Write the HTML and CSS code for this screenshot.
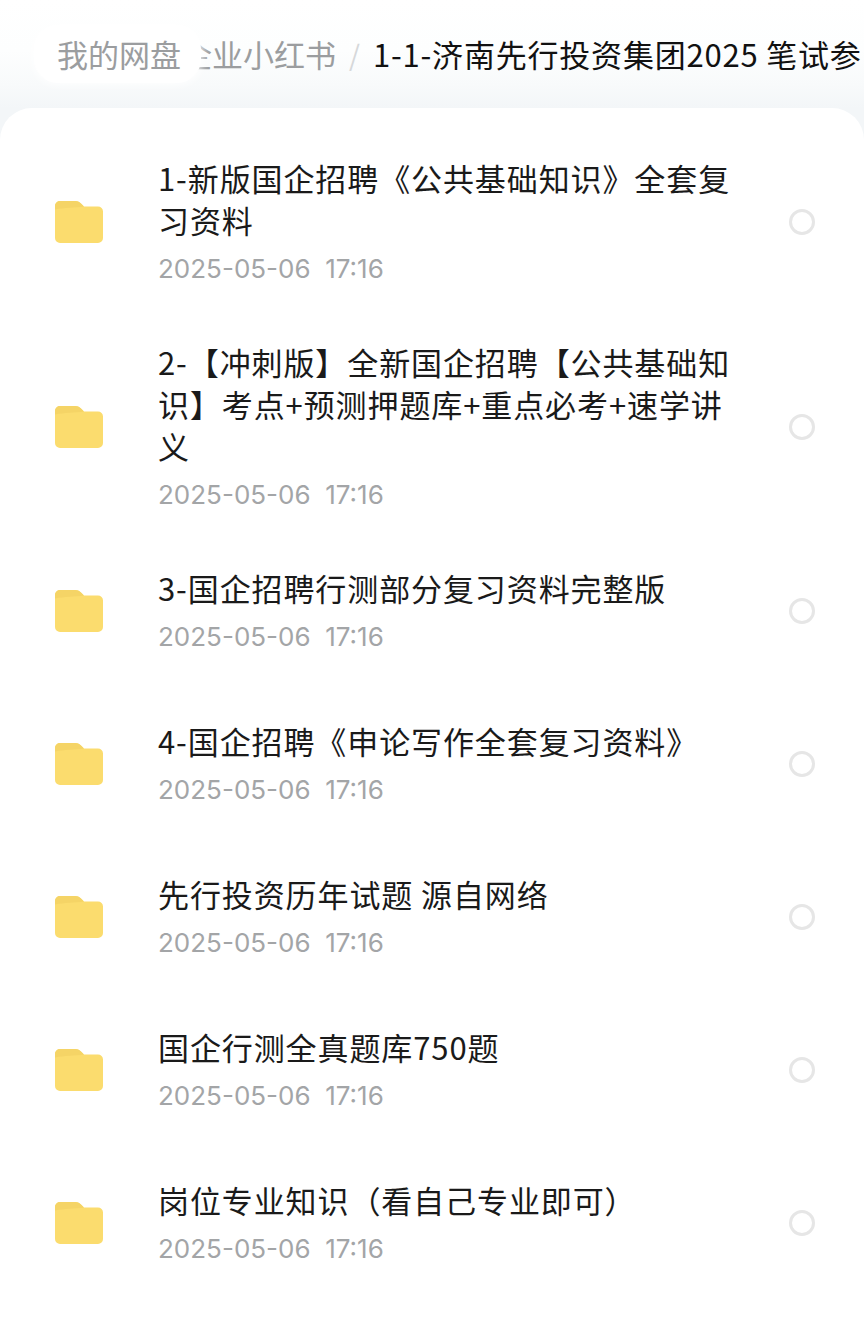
FILE: index.html
```html
<!DOCTYPE html>
<html lang="zh-CN">
<head>
    <meta charset="UTF-8" />
    <meta name="viewport" content="width=device-width, initial-scale=1.0" />
    <title>我的网盘</title>
    <link rel="stylesheet" href="styles.css">
</head>
<body>
    <svg class="sprite" width="0" height="0">
        <symbol id="folder" viewBox="0 0 48 42">
            <path d="M0 5a5 5 0 0 1 5-5h15c3 0 4.500 1 6.500 3l2.500 2.500h14a5 5 0 0 1 5 5v26.500a5 5 0 0 1-5 5H5a5 5 0 0 1-5-5z" fill="#fbdc6e"/>
            <path d="M0 5a5 5 0 0 1 5-5h15c3 0 4.500 1 6.500 3l2.500 2.500c-8 1.500-20 1-29 3z" fill="#f5d466"/>
        </symbol>
    </svg>

    <!-- Breadcrumb -->
    <nav class="breadcrumb">
        <span class="crumb-home">我的网盘</span>
        <span class="crumb-mid">企业小红书</span>
        <span class="crumb-sep">/</span>
        <span class="crumb-current">1-1-济南先行投资集团2025 笔试参</span>
    </nav>

    <!-- File list -->
    <main class="card">
        <div class="row row-two">
            <svg class="folder"><use href="#folder"/></svg>
            <div class="info">
                <div class="name">1-新版国企招聘《公共基础知识》全套复习资料</div>
                <div class="date">2025-05-06&nbsp;&nbsp;17:16</div>
            </div>
            <span class="radio"></span>
        </div>
        <div class="row row-three">
            <svg class="folder"><use href="#folder"/></svg>
            <div class="info">
                <div class="name">2-【冲刺版】全新国企招聘【公共基础知识】考点+预测押题库+重点必考+速学讲义</div>
                <div class="date">2025-05-06&nbsp;&nbsp;17:16</div>
            </div>
            <span class="radio"></span>
        </div>
        <div class="row">
            <svg class="folder"><use href="#folder"/></svg>
            <div class="info">
                <div class="name">3-国企招聘行测部分复习资料完整版</div>
                <div class="date">2025-05-06&nbsp;&nbsp;17:16</div>
            </div>
            <span class="radio"></span>
        </div>
        <div class="row">
            <svg class="folder"><use href="#folder"/></svg>
            <div class="info">
                <div class="name">4-国企招聘《申论写作全套复习资料》</div>
                <div class="date">2025-05-06&nbsp;&nbsp;17:16</div>
            </div>
            <span class="radio"></span>
        </div>
        <div class="row">
            <svg class="folder"><use href="#folder"/></svg>
            <div class="info">
                <div class="name">先行投资历年试题 源自网络</div>
                <div class="date">2025-05-06&nbsp;&nbsp;17:16</div>
            </div>
            <span class="radio"></span>
        </div>
        <div class="row">
            <svg class="folder"><use href="#folder"/></svg>
            <div class="info">
                <div class="name">国企行测全真题库750题</div>
                <div class="date">2025-05-06&nbsp;&nbsp;17:16</div>
            </div>
            <span class="radio"></span>
        </div>
        <div class="row">
            <svg class="folder"><use href="#folder"/></svg>
            <div class="info">
                <div class="name">岗位专业知识（看自己专业即可）</div>
                <div class="date">2025-05-06&nbsp;&nbsp;17:16</div>
            </div>
            <span class="radio"></span>
        </div>
    </main>
</body>
</html>
```

FILE: styles.css
```css
/* Page with soft grey header behind the white card */
html, body {
    height: 100%;
}

body {
    margin: 0;
    height: 1338px;
    overflow: hidden;
    font-family: "Noto Sans CJK SC", "Noto Sans", sans-serif;
    background: linear-gradient(#ffffff 0, #fdfefe 50px, #f8fafb 85px, #f3f6f8 108px);
    display: flex;
    flex-direction: column;
}

.sprite {
    position: absolute;
}

/* Breadcrumb */
.breadcrumb {
    height: 108px;
    flex: none;
    display: flex;
    align-items: center;
    padding-left: 57px;
    white-space: nowrap;
    font-size: 31px;
    line-height: 42px;
    box-sizing: border-box;
}

.crumb-home {
    position: relative;
    z-index: 1;
    color: #9b9d9f;
}

/* white pill sits over the start of the next crumb */
.crumb-home::before {
    content: "";
    position: absolute;
    z-index: -1;
    left: -23px;
    right: -20px;
    top: -8px;
    bottom: -8px;
    background: #fff;
    border-radius: 24px;
    box-shadow: 0 0 8px 2px rgba(255, 255, 255, 0.8);
}

.crumb-mid {
    color: #9b9d9f;
    flex: none;
}

.crumb-sep {
    color: #d6d8da;
    margin: 0 13px 0 13px;
    font-size: 28px;
}

.crumb-current {
    color: #111;
    flex: none;
    letter-spacing: 0.8px;
}

/* Card */
.card {
    flex: 1;
    background: #fff;
    border-radius: 32px 32px 0 0;
    padding: 16px 49px 0 55px;
}

.row {
    display: flex;
    align-items: center;
    min-height: 153px;
}

.row-two {
    min-height: 195px;
}

.row-three {
    min-height: 215px;
}

.folder {
    width: 48px;
    height: 42px;
    flex: none;
    margin-right: 55px;
}

.info {
    flex: 1;
    min-width: 0;
    margin-right: 41px;
}

.name {
    margin-top: -3px;
    font-size: 31px;
    line-height: 42px;
    letter-spacing: 0.9px;
    color: #1a1a1a;
}

.date {
    margin-top: 13px;
    font-family: Inter, "Noto Sans CJK SC", sans-serif;
    font-size: 26px;
    line-height: 30px;
    color: #a3a5a7;
}

.radio {
    width: 20px;
    height: 20px;
    flex: none;
    border: 3px solid #e6e6e6;
    border-radius: 50%;
}
```
